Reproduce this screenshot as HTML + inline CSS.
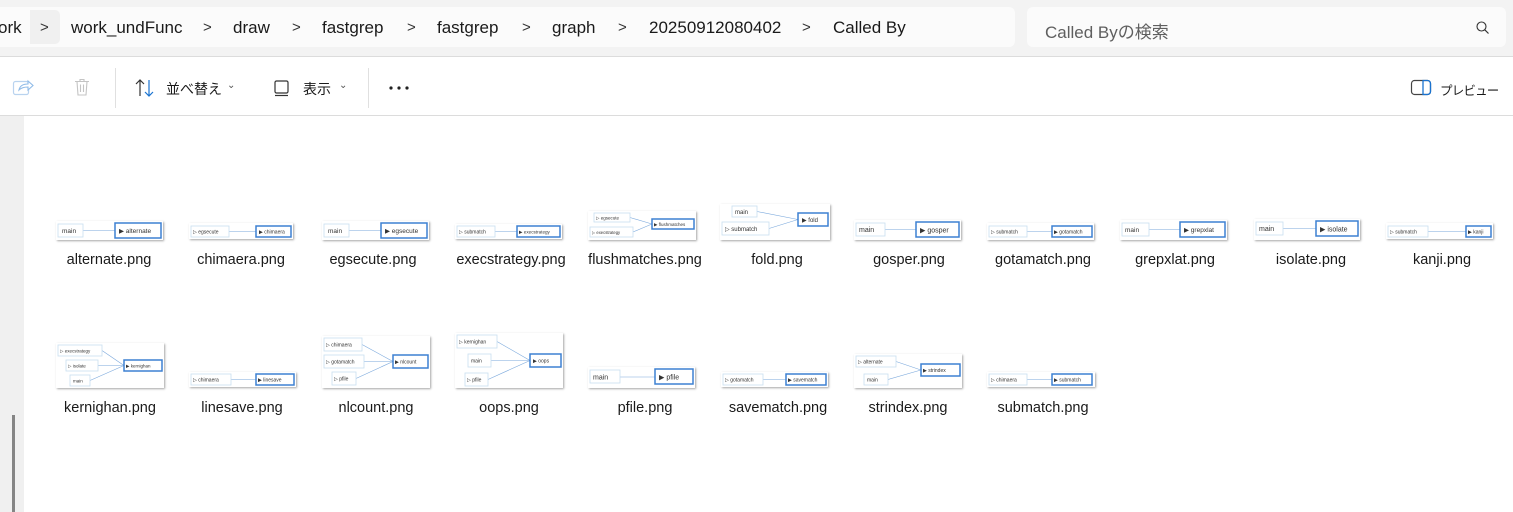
<!DOCTYPE html>
<html><head><meta charset="utf-8">
<style>
*{margin:0;padding:0;box-sizing:border-box}
body{width:1513px;height:512px;overflow:hidden;background:#fff;font-family:"Liberation Sans","Noto Sans CJK JP",sans-serif;position:relative;color:#1a1a1a}
.a{position:absolute;white-space:nowrap}
#hdr{position:absolute;left:0;top:0;width:1513px;height:57px;background:#f3f3f3;border-bottom:1px solid #dcdcdc}
#bc{position:absolute;left:0;top:7px;width:1015px;height:40px;background:#fbfbfb;border-radius:0 6px 6px 0}
#sr{position:absolute;left:1027px;top:7px;width:479px;height:40px;background:#fbfbfb;border-radius:6px}
.bt{font-size:17px;top:18px;color:#1a1a1a}
.ch{font-size:15px;top:19px;color:#333}
#tb{position:absolute;left:0;top:58px;width:1513px;height:58px;border-bottom:1px solid #dcdcdc;background:#fff}
.tt{font-size:14px;top:79px;color:#1a1a1a}
.lbl{position:absolute;font-size:14.5px;width:130px;text-align:center;color:#1a1a1a}
svg.th{position:absolute;background:#fff;box-shadow:1px 1px 2px rgba(0,0,0,.35)}
svg.th rect.s{fill:#fff;stroke:#c9def0;stroke-width:.8}
svg.th rect.t{fill:#fff;stroke:#3d80d2;stroke-width:1.5}
svg.th line{stroke:#7aa8dc;stroke-width:.6}
svg.th text{fill:#333;font-family:"Liberation Sans",sans-serif}
</style></head><body>
<div id="hdr"></div>
<div id="bc"></div>
<div class="a" style="left:30px;top:10px;width:30px;height:34px;background:#f0f0f0;border-radius:0 5px 5px 0"></div>
<div class="a bt" style="left:-2px">ork</div>
<div class="a ch" style="left:40px">&gt;</div>
<div class="a bt" style="left:71px">work_undFunc</div>
<div class="a ch" style="left:203px">&gt;</div>
<div class="a bt" style="left:233px">draw</div>
<div class="a ch" style="left:292px">&gt;</div>
<div class="a bt" style="left:322px">fastgrep</div>
<div class="a ch" style="left:407px">&gt;</div>
<div class="a bt" style="left:437px">fastgrep</div>
<div class="a ch" style="left:522px">&gt;</div>
<div class="a bt" style="left:552px">graph</div>
<div class="a ch" style="left:618px">&gt;</div>
<div class="a bt" style="left:649px">20250912080402</div>
<div class="a ch" style="left:802px">&gt;</div>
<div class="a bt" style="left:833px">Called By</div>
<div id="sr"></div>
<div class="a" style="left:1045px;top:18px;font-size:17px;color:#5f5f5f">Called Byの検索</div>
<svg class="a" style="left:1475px;top:20px" width="16" height="16" viewBox="0 0 16 16"><circle cx="6.5" cy="6.5" r="4.5" fill="none" stroke="#333" stroke-width="1.1"/><line x1="9.8" y1="9.8" x2="13.5" y2="13.5" stroke="#333" stroke-width="1.2"/></svg>
<div id="tb"></div>
<svg class="a" style="left:12px;top:77px" width="22" height="20" viewBox="0 0 22 20"><rect x="1.5" y="4.5" width="15" height="13" rx="2" fill="none" stroke="#b9d3ef" stroke-width="1.2"/><path d="M7 13 C8 8 12 7 16 7 L16 4 L21 8.5 L16 13 L16 10 C12 10 9 11 7 13Z" fill="#fff" stroke="#8fbbe8" stroke-width="1.1"/></svg>
<svg class="a" style="left:72px;top:77px" width="20" height="20" viewBox="0 0 20 20"><path d="M3 4.5H17M8 4.5V2.5H12V4.5M5 4.5L6 18H14L15 4.5M8.5 7.5V15M11.5 7.5V15" fill="none" stroke="#c4c4c4" stroke-width="1.1"/></svg>
<div class="a" style="left:115px;top:68px;width:1px;height:40px;background:#e0e0e0"></div>
<svg class="a" style="left:134px;top:78px" width="22" height="20" viewBox="0 0 22 20"><path d="M6 18V2M2 6L6 2L10 6" fill="none" stroke="#333" stroke-width="1.2"/><path d="M15 2V18M11 14L15 18L19 14" fill="none" stroke="#1a73d0" stroke-width="1.2"/></svg>
<div class="a tt" style="left:166px">並べ替え</div>
<div class="a" style="left:227px;top:80px;font-size:10px;color:#555">&#8964;</div>
<svg class="a" style="left:273px;top:79px" width="18" height="18" viewBox="0 0 18 18"><rect x="2" y="2" width="13" height="12" rx="1.5" fill="none" stroke="#333" stroke-width="1.2"/><line x1="2" y1="16.5" x2="15" y2="16.5" stroke="#333" stroke-width="1.2"/></svg>
<div class="a tt" style="left:303px">表示</div>
<div class="a" style="left:339px;top:80px;font-size:10px;color:#555">&#8964;</div>
<div class="a" style="left:368px;top:68px;width:1px;height:40px;background:#e0e0e0"></div>
<svg class="a" style="left:388px;top:85px" width="24" height="6" viewBox="0 0 24 6"><circle cx="3" cy="3" r="1.6" fill="#222"/><circle cx="11" cy="3" r="1.6" fill="#222"/><circle cx="19" cy="3" r="1.6" fill="#222"/></svg>
<svg class="a" style="left:1410px;top:79px" width="22" height="17" viewBox="0 0 22 17"><rect x="1.5" y="1.5" width="19" height="14" rx="3" fill="none" stroke="#444" stroke-width="1.2"/><path d="M13 1.5H17.5A3 3 0 0 1 20.5 4.5V12.5A3 3 0 0 1 17.5 15.5H13Z" fill="none" stroke="#1a73d0" stroke-width="1.3"/></svg>
<div class="a" style="left:1440px;top:80px;font-size:12.5px;letter-spacing:-0.8px;color:#1a1a1a">プレビュー</div>
<div class="a" style="left:0;top:116px;width:24px;height:396px;background:#f0f0f0"></div>
<div class="a" style="left:12px;top:415px;width:3px;height:97px;background:#858585"></div>

<!-- row 1 -->
<svg class="th" style="left:56px;top:221px" width="107" height="19" viewBox="0 0 107 19"><line x1="27" y1="9.5" x2="59" y2="9.5"/><rect class="s" x="2" y="3" width="25" height="13"/><text x="6" y="12" font-size="6.5">main</text><rect class="t" x="59" y="2" width="46" height="15"/><text x="63" y="12" font-size="6.5">▶ alternate</text></svg>
<svg class="th" style="left:189px;top:223px" width="104" height="16" viewBox="0 0 104 16"><line x1="40" y1="8.5" x2="67" y2="8.5"/><rect class="s" x="2" y="3" width="38" height="11"/><text x="4" y="10.5" font-size="5">▷ egsecute</text><rect class="t" x="67" y="3" width="35" height="11"/><text x="70" y="10.5" font-size="5">▶ chimaera</text></svg>
<svg class="th" style="left:322px;top:221px" width="107" height="19" viewBox="0 0 107 19"><line x1="27" y1="9.5" x2="59" y2="9.5"/><rect class="s" x="2" y="3" width="25" height="13"/><text x="6" y="12" font-size="6.5">main</text><rect class="t" x="59" y="2" width="46" height="15"/><text x="63" y="12" font-size="6.5">▶ egsecute</text></svg>
<svg class="th" style="left:455px;top:224px" width="107" height="15" viewBox="0 0 107 15"><line x1="40" y1="7.5" x2="62" y2="7.5"/><rect class="s" x="2" y="2" width="38" height="11"/><text x="4" y="9.5" font-size="5">▷ submatch</text><rect class="t" x="62" y="2" width="43" height="11"/><text x="64" y="9.5" font-size="4.6">▶ execstrategy</text></svg>
<svg class="th" style="left:588px;top:211px" width="108" height="29" viewBox="0 0 108 29"><line x1="42" y1="6.5" x2="64" y2="13"/><line x1="45" y1="21" x2="64" y2="13"/><rect class="s" x="6" y="2" width="36" height="9"/><text x="8" y="8.5" font-size="4.5">▷ egsecute</text><rect class="s" x="2" y="16" width="43" height="10"/><text x="4" y="23" font-size="4.2">▷ execstrategy</text><rect class="t" x="64" y="8" width="42" height="10"/><text x="66" y="15" font-size="4.5">▶ flushmatches</text></svg>
<svg class="th" style="left:720px;top:204px" width="110" height="36" viewBox="0 0 110 36"><line x1="37" y1="7.5" x2="78" y2="15.5"/><line x1="49" y1="24.5" x2="78" y2="15.5"/><rect class="s" x="12" y="2" width="25" height="11"/><text x="15" y="10" font-size="6">main</text><rect class="s" x="2" y="18" width="47" height="13"/><text x="5" y="27" font-size="6">▷ submatch</text><rect class="t" x="78" y="9" width="30" height="13"/><text x="82" y="18" font-size="6">▶ fold</text></svg>
<svg class="th" style="left:854px;top:220px" width="107" height="20" viewBox="0 0 107 20"><line x1="31" y1="9.5" x2="62" y2="9.5"/><rect class="s" x="2" y="3" width="29" height="13"/><text x="5" y="12" font-size="7">main</text><rect class="t" x="62" y="2" width="43" height="15"/><text x="66" y="12.5" font-size="7">▶ gosper</text></svg>
<svg class="th" style="left:987px;top:223px" width="107" height="17" viewBox="0 0 107 17"><line x1="40" y1="8.5" x2="65" y2="8.5"/><rect class="s" x="2" y="3" width="38" height="11"/><text x="4" y="10.5" font-size="5">▷ submatch</text><rect class="t" x="65" y="3" width="40" height="11"/><text x="67" y="10.5" font-size="5">▶ gotamatch</text></svg>
<svg class="th" style="left:1120px;top:220px" width="107" height="20" viewBox="0 0 107 20"><line x1="29" y1="9.5" x2="60" y2="9.5"/><rect class="s" x="2" y="3" width="27" height="13"/><text x="5" y="12" font-size="6.5">main</text><rect class="t" x="60" y="2" width="45" height="15"/><text x="64" y="12" font-size="6.5">▶ grepxlat</text></svg>
<svg class="th" style="left:1254px;top:219px" width="106" height="21" viewBox="0 0 106 21"><line x1="29" y1="9.5" x2="62" y2="9.5"/><rect class="s" x="2" y="3" width="27" height="13"/><text x="5" y="12" font-size="7">main</text><rect class="t" x="62" y="2" width="42" height="15"/><text x="66" y="12.5" font-size="7">▶ isolate</text></svg>
<svg class="th" style="left:1386px;top:223px" width="107" height="16" viewBox="0 0 107 16"><line x1="42" y1="8.5" x2="80" y2="8.5"/><rect class="s" x="2" y="3" width="40" height="11"/><text x="4" y="10.5" font-size="5">▷ submatch</text><rect class="t" x="80" y="3" width="25" height="11"/><text x="82" y="10.5" font-size="5">▶ kanji</text></svg>

<div class="lbl" style="left:44px;top:252px">alternate.png</div>
<div class="lbl" style="left:176px;top:252px">chimaera.png</div>
<div class="lbl" style="left:308px;top:252px">egsecute.png</div>
<div class="lbl" style="left:446px;top:252px">execstrategy.png</div>
<div class="lbl" style="left:580px;top:252px">flushmatches.png</div>
<div class="lbl" style="left:712px;top:252px">fold.png</div>
<div class="lbl" style="left:844px;top:252px">gosper.png</div>
<div class="lbl" style="left:978px;top:252px">gotamatch.png</div>
<div class="lbl" style="left:1110px;top:252px">grepxlat.png</div>
<div class="lbl" style="left:1246px;top:252px">isolate.png</div>
<div class="lbl" style="left:1377px;top:252px">kanji.png</div>

<!-- row 2 -->
<svg class="th" style="left:56px;top:343px" width="108" height="45" viewBox="0 0 108 45"><line x1="46" y1="7.5" x2="68" y2="22.5"/><line x1="42" y1="22.5" x2="68" y2="22.5"/><line x1="34" y1="37.5" x2="68" y2="22.5"/><rect class="s" x="2" y="2" width="44" height="11"/><text x="4" y="9.5" font-size="4.5">▷ execstrategy</text><rect class="s" x="10" y="17" width="32" height="11"/><text x="12" y="24.5" font-size="4.5">▷ isolate</text><rect class="s" x="14" y="32" width="20" height="11"/><text x="17" y="39.5" font-size="4.5">main</text><rect class="t" x="68" y="17" width="38" height="11"/><text x="70" y="24.5" font-size="4.5">▶ kernighan</text></svg>
<svg class="th" style="left:189px;top:372px" width="107" height="15" viewBox="0 0 107 15"><line x1="42" y1="7.5" x2="67" y2="7.5"/><rect class="s" x="2" y="2" width="40" height="11"/><text x="4" y="9.5" font-size="5">▷ chimaera</text><rect class="t" x="67" y="2" width="38" height="11"/><text x="69" y="9.5" font-size="5">▶ linesave</text></svg>
<svg class="th" style="left:322px;top:336px" width="108" height="52" viewBox="0 0 108 52"><line x1="40" y1="8.5" x2="71" y2="25.5"/><line x1="42" y1="25.5" x2="71" y2="25.5"/><line x1="34" y1="42.5" x2="71" y2="25.5"/><rect class="s" x="2" y="2" width="38" height="13"/><text x="4" y="10.5" font-size="5">▷ chimaera</text><rect class="s" x="2" y="19" width="40" height="13"/><text x="4" y="27.5" font-size="5">▷ gotamatch</text><rect class="s" x="10" y="36" width="24" height="13"/><text x="12" y="44.5" font-size="5">▷ pfile</text><rect class="t" x="71" y="19" width="35" height="13"/><text x="73" y="27.5" font-size="5">▶ nlcount</text></svg>
<svg class="th" style="left:455px;top:333px" width="108" height="55" viewBox="0 0 108 55"><line x1="42" y1="8.5" x2="75" y2="27.5"/><line x1="36" y1="27.5" x2="75" y2="27.5"/><line x1="33" y1="46.5" x2="75" y2="27.5"/><rect class="s" x="2" y="2" width="40" height="13"/><text x="4" y="10.5" font-size="5">▷ kernighan</text><rect class="s" x="13" y="21" width="23" height="13"/><text x="16" y="29.5" font-size="5">main</text><rect class="s" x="10" y="40" width="23" height="13"/><text x="12" y="48.5" font-size="5">▷ pfile</text><rect class="t" x="75" y="21" width="31" height="13"/><text x="78" y="29.5" font-size="5">▶ oops</text></svg>
<svg class="th" style="left:588px;top:367px" width="107" height="21" viewBox="0 0 107 21"><line x1="32" y1="10" x2="67" y2="10"/><rect class="s" x="2" y="3" width="30" height="13"/><text x="5" y="12.5" font-size="7">main</text><rect class="t" x="67" y="2" width="38" height="15"/><text x="71" y="12.5" font-size="7">▶ pfile</text></svg>
<svg class="th" style="left:721px;top:372px" width="107" height="15" viewBox="0 0 107 15"><line x1="42" y1="7.5" x2="65" y2="7.5"/><rect class="s" x="2" y="2" width="40" height="11"/><text x="4" y="9.5" font-size="5">▷ gotamatch</text><rect class="t" x="65" y="2" width="40" height="11"/><text x="67" y="9.5" font-size="5">▶ savematch</text></svg>
<svg class="th" style="left:854px;top:354px" width="108" height="34" viewBox="0 0 108 34"><line x1="42" y1="7.5" x2="67" y2="16"/><line x1="34" y1="25.5" x2="67" y2="16"/><rect class="s" x="2" y="2" width="40" height="11"/><text x="4" y="9.5" font-size="5">▷ alternate</text><rect class="s" x="10" y="20" width="24" height="11"/><text x="13" y="27.5" font-size="5">main</text><rect class="t" x="67" y="10" width="39" height="12"/><text x="69" y="18" font-size="5">▶ strindex</text></svg>
<svg class="th" style="left:987px;top:372px" width="108" height="15" viewBox="0 0 108 15"><line x1="40" y1="7.5" x2="65" y2="7.5"/><rect class="s" x="2" y="2" width="38" height="11"/><text x="4" y="9.5" font-size="5">▷ chimaera</text><rect class="t" x="65" y="2" width="40" height="11"/><text x="67" y="9.5" font-size="5">▶ submatch</text></svg>

<div class="lbl" style="left:45px;top:400px">kernighan.png</div>
<div class="lbl" style="left:177px;top:400px">linesave.png</div>
<div class="lbl" style="left:311px;top:400px">nlcount.png</div>
<div class="lbl" style="left:444px;top:400px">oops.png</div>
<div class="lbl" style="left:580px;top:400px">pfile.png</div>
<div class="lbl" style="left:713px;top:400px">savematch.png</div>
<div class="lbl" style="left:843px;top:400px">strindex.png</div>
<div class="lbl" style="left:978px;top:400px">submatch.png</div>
</body></html>
